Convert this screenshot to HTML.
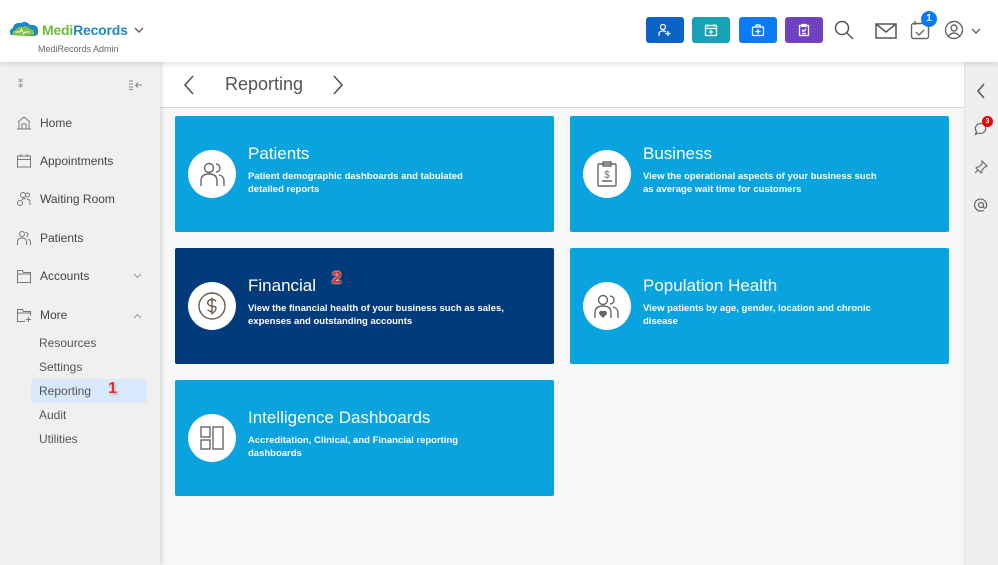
<!DOCTYPE html>
<html><head><meta charset="utf-8">
<style>
*{box-sizing:border-box;margin:0;padding:0}
body{width:998px;height:565px;overflow:hidden;font-family:"Liberation Sans",sans-serif;background:#f7f7f7;position:relative}
.hdr{position:absolute;left:0;top:0;width:998px;height:62px;background:#fff;box-shadow:0 2px 5px rgba(0,0,0,.12);z-index:3}
.side{position:absolute;left:0;top:62px;width:160px;height:503px;background:#f0f0f0;box-shadow:2px 0 4px rgba(0,0,0,.12);z-index:2}
.rail{position:absolute;left:964px;top:62px;width:34px;height:503px;background:#efefef;border-left:1px solid #e2e2e2}
.bc{position:absolute;left:160px;top:62px;width:804px;height:46px;background:#fff;border-bottom:1px solid #d6d6d6}
.nav{position:absolute;left:16px;font-size:12px;color:#444;display:flex;align-items:center}
.nav svg{width:16px;height:16px}
.nav span{margin-left:8px}
.sub{position:absolute;left:39px;font-size:12px;color:#555}
.card{position:absolute;width:379px;height:116px;background:#09a3e0;color:#fff;border-radius:2px}
.card .ic{position:absolute;left:13px;top:34px;width:48px;height:48px;border-radius:50%;background:#fff;display:flex;align-items:center;justify-content:center}
.card h3{position:absolute;left:73px;top:28px;font-size:17px;font-weight:normal}
.card p{position:absolute;left:73px;top:54px;font-size:9.5px;font-weight:bold;line-height:13px;width:240px}
.btn{position:absolute;top:17px;width:38px;height:26px;border-radius:3px;display:flex;align-items:center;justify-content:center}
</style></head><body>
<div class="hdr">
 <svg style="position:absolute;left:8px;top:20px" width="32" height="18" viewBox="0 0 32 18"><path d="M3 15 Q0 10 5 8 Q6 2 13 3 Q18 0 22 5 Q30 4 30 11 Q31 16 25 16 Z" fill="#1f86c8"/><path d="M5 15 Q3 11 8 10 Q10 6 15 7 Q19 5 22 9 Q26 9 26 13 L26 15Z" fill="#7dc242"/><path d="M7 12 h5 l1.5-3 l2 5 l1.5-2 h5" stroke="#fff" fill="none" stroke-width=".9"/></svg>
 <div style="position:absolute;left:42px;top:22px;font-size:14px;font-weight:bold;letter-spacing:-.2px"><span style="color:#6cbb3c">Medi</span><span style="color:#1e88c9">Records</span></div>
 <svg style="position:absolute;left:134px;top:27px" width="10" height="6"><path d="M1 1l4 4 4-4" stroke="#666" fill="none" stroke-width="1.5"/></svg>
 <div style="position:absolute;left:38px;top:44px;font-size:9px;color:#666">MediRecords Admin</div>
 <div class="btn" style="left:646px;background:#0b63c5"><svg width="14" height="14" viewBox="0 0 14 14" fill="none" stroke="#fff" stroke-width="1.3"><circle cx="5" cy="4" r="2.5"/><path d="M1 13v-2q0-3 4-3q2 0 3 1M10 8v5M7.5 10.5h5"/></svg></div>
 <div class="btn" style="left:692px;background:#17a2b8"><svg width="14" height="14" viewBox="0 0 14 14" fill="none" stroke="#fff" stroke-width="1.3"><rect x="1.5" y="2.5" width="11" height="10"/><path d="M1.5 5.5h11M4 1v3M10 1v3M7 7v4M5 9h4"/></svg></div>
 <div class="btn" style="left:739px;background:#0a7bf5"><svg width="14" height="14" viewBox="0 0 14 14" fill="none" stroke="#fff" stroke-width="1.3"><rect x="1.5" y="4" width="11" height="8.5" rx="1"/><path d="M5 4V2h4v2M7 6v5M4.5 8.5h5"/></svg></div>
 <div class="btn" style="left:785px;background:#6f42c1"><svg width="14" height="14" viewBox="0 0 14 14" fill="none" stroke="#fff" stroke-width="1.3"><rect x="2.5" y="2.5" width="9" height="10"/><path d="M5 1.5h4v2H5zM5 7l1.5 1.5L9 6M5 10.5h4"/></svg></div>
 <svg style="position:absolute;left:834px;top:20px" width="20" height="20" fill="none" stroke="#555" stroke-width="1.5"><circle cx="8" cy="8" r="6.5"/><path d="M13 13l6 6"/></svg>
 <svg style="position:absolute;left:875px;top:23px" width="22" height="16" fill="none" stroke="#555" stroke-width="1.5"><rect x="1" y="1" width="20" height="14"/><path d="M1 1l10 8 10-8"/></svg>
 <svg style="position:absolute;left:910px;top:20px" width="20" height="20" fill="none" stroke="#666" stroke-width="1.4"><rect x="1.5" y="3.5" width="17" height="15" rx="2"/><path d="M5 1v4M15 1v4M6 12l3 3 5-5"/></svg>
 <div style="position:absolute;left:921px;top:11px;width:16px;height:16px;border-radius:50%;background:#0a7bf5;color:#fff;font-size:10px;font-weight:bold;text-align:center;line-height:16px">1</div>
 <svg style="position:absolute;left:944px;top:20px" width="20" height="20" fill="none" stroke="#666" stroke-width="1.4"><circle cx="10" cy="10" r="8.5"/><circle cx="10" cy="8" r="3"/><path d="M4.5 16q5.5-6 11 0"/></svg>
 <svg style="position:absolute;left:971px;top:28px" width="10" height="6"><path d="M1 1l4 4 4-4" stroke="#666" fill="none" stroke-width="1.5"/></svg>
</div>
<div class="side">
 <div style="position:absolute;left:18px;top:16px;font-size:11px;color:#888">⁑</div>
 <svg style="position:absolute;left:129px;top:18px" width="14" height="10" fill="none" stroke="#888" stroke-width="1"><path d="M0 1h4M0 4h4M0 7h4M0 9.5h4M13 5H7M9 2.5L6.5 5 9 7.5"/></svg>
 <div class="nav" style="top:53px"><svg viewBox="0 0 16 16" fill="none" stroke="#777"><path d="M2 7L8 2l6 5M3 7v7h10V7M6 14V9h4v5M1 14h14"/></svg><span>Home</span></div>
 <div class="nav" style="top:91px"><svg viewBox="0 0 16 16" fill="none" stroke="#777"><rect x="1.5" y="3" width="13" height="11"/><path d="M1.5 6.5h13M5 1v3M11 1v3"/></svg><span>Appointments</span></div>
 <div class="nav" style="top:129px"><svg viewBox="0 0 16 16" fill="none" stroke="#777"><circle cx="7" cy="4" r="2.5"/><circle cx="11.5" cy="4" r="2"/><circle cx="4" cy="12" r="2.5"/><path d="M6 9q1-2 4-1M11 8q3 0 3 4v2"/></svg><span>Waiting Room</span></div>
 <div class="nav" style="top:168px"><svg viewBox="0 0 16 16" fill="none" stroke="#777"><circle cx="6" cy="4" r="2.5"/><path d="M10 2.5a2 2 0 010 4M1.5 15v-3q0-4 4.5-4t4.5 4v3M12 9q2.5 1 2.5 4v2"/></svg><span>Patients</span></div>
 <div class="nav" style="top:206px"><svg viewBox="0 0 16 16" fill="none" stroke="#777"><path d="M1.5 2.5h5l1 2h7v10h-13zM1.5 6h13"/></svg><span>Accounts</span></div>
 <svg style="position:absolute;left:133px;top:211px" width="9" height="6"><path d="M1 1l3.5 3.5L8 1" stroke="#999" fill="none"/></svg>
 <div class="nav" style="top:245px"><svg viewBox="0 0 16 16" fill="none" stroke="#777"><path d="M9 14.5H1.5v-12h5l1 2h7v4M1.5 6h13M12.5 10v5M10 12.5h5"/></svg><span>More</span></div>
 <svg style="position:absolute;left:133px;top:251px" width="9" height="6"><path d="M1 5l3.5-3.5L8 5" stroke="#999" fill="none"/></svg>
 <div class="sub" style="top:274px">Resources</div>
 <div class="sub" style="top:298px">Settings</div>
 <div style="position:absolute;left:31px;top:317px;width:116px;height:24px;background:#d8e9fb;border-radius:3px"></div>
 <div class="sub" style="top:322px">Reporting</div>
 <div style="position:absolute;left:108px;top:318px;font-size:16px;font-weight:bold;color:#e8262f;text-shadow:0 0 2px #fff,1px 1px 2px #888">1</div>
 <div class="sub" style="top:346px">Audit</div>
 <div class="sub" style="top:370px">Utilities</div>
</div>
<div class="bc">
 <svg style="position:absolute;left:23px;top:13px" width="12" height="20"><path d="M10 1L2 10l8 9" stroke="#555" fill="none" stroke-width="1.6"/></svg>
 <div style="position:absolute;left:65px;top:12px;font-size:18px;color:#555">Reporting</div>
 <svg style="position:absolute;left:172px;top:13px" width="12" height="20"><path d="M2 1l8 9-8 9" stroke="#555" fill="none" stroke-width="1.6"/></svg>
</div>
<div class="rail">
 <svg style="position:absolute;left:11px;top:21px" width="10" height="16"><path d="M8 1L2 8l6 7" stroke="#555" fill="none" stroke-width="1.5"/></svg>
 <svg style="position:absolute;left:9px;top:60px" width="14" height="14" fill="none" stroke="#666" stroke-width="1.2"><path d="M7 1.5a5.5 5 0 11-3 9.5L1.5 12.5l1-3A5.5 5 0 017 1.5z"/></svg>
 <div style="position:absolute;left:17px;top:54px;width:11px;height:11px;border-radius:50%;background:#e00;color:#fff;font-size:7px;text-align:center;line-height:11px;font-weight:bold">3</div>
 <svg style="position:absolute;left:9px;top:98px" width="14" height="14" fill="none" stroke="#666" stroke-width="1.1"><path d="M8 1l5 5-2 1-3 3 0 2-1 1-5-5 1-1 2 0 3-3zM4.5 9.5L1 13"/></svg>
 <svg style="position:absolute;left:9px;top:136px" width="14" height="14" fill="none" stroke="#666" stroke-width="1.2"><circle cx="7" cy="7" r="2.5"/><path d="M9.5 7v1.5q0 2 2 1.5 1.5-1 1-4A6 6 0 107 13q2 0 3-.5"/></svg>
</div>
<div class="card" style="left:175px;top:116px"><div class="ic"><svg width="28" height="28" viewBox="0 0 28 28" fill="none" stroke="#666" stroke-width="1.4"><circle cx="11" cy="8" r="4.5"/><path d="M18 4a4 4 0 010 8M3 26v-5q0-7 8-7t8 7v5M21 15q5 1 5 6v5"/></svg></div><h3>Patients</h3><p>Patient demographic dashboards and tabulated detailed reports</p></div>
<div class="card" style="left:570px;top:116px"><div class="ic"><svg width="28" height="28" viewBox="0 0 28 28" fill="none" stroke="#666" stroke-width="1.4"><rect x="5" y="4" width="18" height="22" rx="1"/><path d="M10 2h8v4h-8zM9 21h10"/><text x="14" y="18" font-size="10" text-anchor="middle" fill="#666" stroke="none" font-family="Liberation Sans">$</text></svg></div><h3>Business</h3><p>View the operational aspects of your business such as average wait time for customers</p></div>
<div class="card" style="left:175px;top:248px;background:#023b7b"><div class="ic"><svg width="30" height="30" viewBox="0 0 30 30" fill="none" stroke="#6b5a48" stroke-width="1.4"><circle cx="15" cy="15" r="13"/><path d="M19 10.5q-1-2-4-2t-4 2 1 3.5 5 1.5 1.5 3.5-4 2-4-2M15 6.5v17"/></svg></div><h3>Financial</h3><p style="width:265px">View the financial health of your business such as sales, expenses and outstanding accounts</p>
 <div style="position:absolute;left:157px;top:20px;font-size:17px;font-weight:bold;color:#e8262f;text-shadow:0 0 2px #fff,0 0 2px #fff,1px 1px 3px #000">2</div></div>
<div class="card" style="left:570px;top:248px"><div class="ic"><svg width="28" height="28" viewBox="0 0 28 28" fill="none" stroke="#666" stroke-width="1.4"><circle cx="10" cy="8" r="4.5"/><path d="M17 4a4 4 0 010 8M2 26v-5q0-7 8-7t8 7v5M20 15q5 1 5 6v5"/><path d="M10 25l-3-3q-1-2 1-2.5 1.5 0 2 1 .5-1 2-1 2 .5 1 2.5z" fill="#666"/></svg></div><h3>Population Health</h3><p>View patients by age, gender, location and chronic disease</p></div>
<div class="card" style="left:175px;top:380px"><div class="ic"><svg width="28" height="28" viewBox="0 0 28 28" fill="none" stroke="#666" stroke-width="1.4"><rect x="3" y="3" width="9" height="10"/><rect x="3" y="16" width="9" height="9"/><rect x="15" y="3" width="10" height="22"/></svg></div><h3>Intelligence Dashboards</h3><p>Accreditation, Clinical, and Financial reporting dashboards</p></div>
</body></html>
